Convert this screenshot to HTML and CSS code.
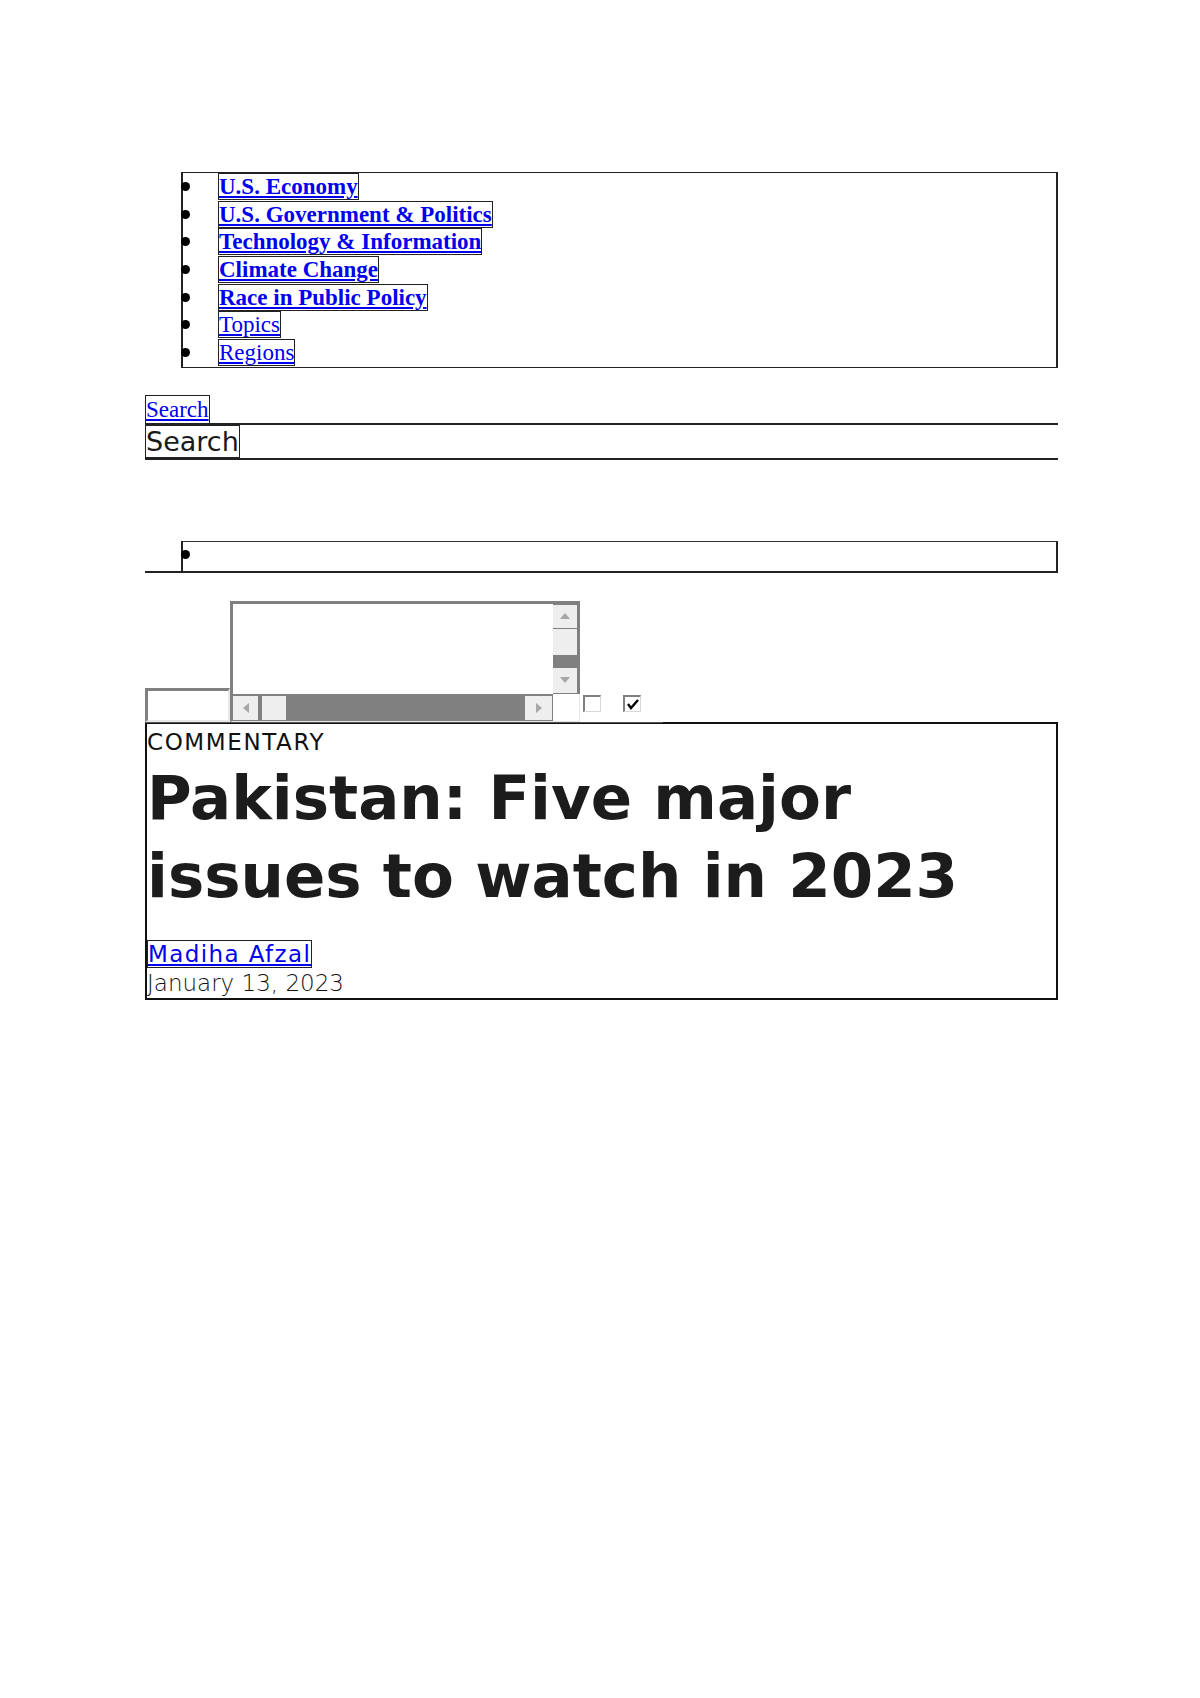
FILE: index.html
```html
<!DOCTYPE html>
<html lang="en">
<head>
<meta charset="utf-8">
<title>Pakistan: Five major issues to watch in 2023</title>
<link rel="stylesheet" href="styles.css">
</head>
<body>
<div class="page">
  <ul class="menu">
    <li><a class="menu-link strong" href="#">U.S. Economy</a></li>
    <li><a class="menu-link strong" href="#">U.S. Government &amp; Politics</a></li>
    <li><a class="menu-link strong" href="#">Technology &amp; Information</a></li>
    <li><a class="menu-link strong" href="#">Climate Change</a></li>
    <li><a class="menu-link strong" href="#">Race in Public Policy</a></li>
    <li><a class="menu-link" href="#">Topics</a></li>
    <li><a class="menu-link" href="#">Regions</a></li>
  </ul>

  <div class="search-toggle"><a class="search-link" href="#">Search</a></div>
  <form class="search-form"><label class="search-label">Search</label></form>

  <div class="subnav">
    <ul class="subnav-list"><li></li></ul>
  </div>

  <div class="controls">
    <span class="text-input"></span>
    <div class="textarea">
      <div class="ta-body"></div>
      <div class="vbar">
        <span class="sb-btn v-btn"><svg width="12" height="8" viewBox="0 0 12 8"><polygon points="1,7 11,7 6,1" fill="#a6a6a6"/></svg></span>
        <span class="v-thumb"></span>
        <span class="v-track"></span>
        <span class="sb-btn v-btn down"><svg width="12" height="8" viewBox="0 0 12 8"><polygon points="1,1 11,1 6,7" fill="#a6a6a6"/></svg></span>
      </div>
      <div class="hbar">
        <span class="sb-btn h-btn"><svg width="8" height="12" viewBox="0 0 8 12"><polygon points="7,1 7,11 1,6" fill="#a6a6a6"/></svg></span>
        <span class="h-thumb"></span>
        <span class="h-track"></span>
        <span class="sb-btn h-btn right"><svg width="8" height="12" viewBox="0 0 8 12"><polygon points="1,1 1,11 7,6" fill="#a6a6a6"/></svg></span>
      </div>
      <div class="corner"></div>
    </div>
    <span class="checkbox"></span>
    <span class="checkbox checked"><svg width="14" height="14" viewBox="0 0 14 14"><polyline points="2,7 5,11 12,3" fill="none" stroke="#000" stroke-width="2.4"/></svg></span>
  </div>

  <article class="article">
    <div class="kicker">COMMENTARY</div>
    <h1 class="headline">Pakistan: Five major issues to watch in 2023</h1>
    <div class="byline"><a class="author" href="#">Madiha Afzal</a></div>
    <div class="date">January 13, 2023</div>
  </article>
</div>
</body>
</html>
```

FILE: styles.css
```css
html, body {
  margin: 0;
  padding: 0;
  background: #fff;
}

.page {
  width: 913px;
  margin-left: 145px;
  padding-top: 172px;
  font-family: "DejaVu Sans", sans-serif;
  color: #111;
}

/* primary menu */
.menu {
  list-style: none;
  margin: 0 0 0 36px;
  padding: 0;
  border: 1px solid #222;
  border-left-width: 2px;
  border-right-width: 2px;
  font-family: "Liberation Serif", "Times New Roman", serif;
  font-size: 23px;
}

.menu li {
  height: 27.7px;
  line-height: 27.7px;
  white-space: nowrap;
}

.menu li::before,
.subnav-list li::before {
  content: "";
  display: inline-block;
  width: 9px;
  height: 9px;
  border-radius: 50%;
  background: #000;
  margin-left: -2px;
  margin-right: 28px;
  vertical-align: 3px;
}

.menu-link {
  color: #0000ee;
  text-decoration: underline;
  border: 1px solid #222;
}

.menu-link.strong {
  font-weight: bold;
}

/* search */
.search-toggle {
  margin-top: 27px;
  height: 28px;
}

.search-link {
  display: inline-block;
  vertical-align: top;
  font-family: "Liberation Serif", "Times New Roman", serif;
  font-size: 23px;
  line-height: 26px;
  padding-top: 1px;
  height: 26px;
  color: #0000ee;
  text-decoration: underline;
  border: 1px solid #222;
}

.search-form {
  margin: 0;
  height: 33px;
  border-top: 2px solid #222;
  border-bottom: 2px solid #222;
}

.search-label {
  display: inline-block;
  vertical-align: top;
  font-size: 27px;
  line-height: 31px;
  color: #1a1a1a;
  border: 1px solid #222;
}

/* secondary nav */
.subnav {
  margin-top: 81px;
  border-bottom: 2px solid #222;
}

.subnav-list {
  list-style: none;
  margin: 0 0 0 36px;
  padding: 0;
  border-top: 1px solid #333;
  border-left: 2px solid #222;
  border-right: 2px solid #222;
}

.subnav-list li {
  height: 29px;
  line-height: 29px;
}

/* form controls */
.controls {
  position: relative;
  z-index: 1;
  display: flex;
  align-items: flex-end;
  width: 518px;
  margin-top: 28px;
  margin-bottom: -1px;
  background: #fff;
  border-bottom: 1px solid #555;
}

.text-input {
  box-sizing: border-box;
  width: 85px;
  height: 34px;
  background: #fff;
  border-top: 3px solid #808080;
  border-left: 3px solid #808080;
  border-right: 2px solid #e8e8e8;
  border-bottom: 2px solid #e8e8e8;
}

.textarea {
  display: grid;
  grid-template-columns: 320px 27px;
  grid-template-rows: 90px 27px;
  border-top: 3px solid #808080;
  border-left: 3px solid #808080;
  border-bottom: 1px solid #e6e6e6;
  background: #fff;
}

.ta-body {
  background: #fff;
}

.vbar {
  display: flex;
  flex-direction: column;
  background: #808080;
  padding: 1px 3px 1px 0;
}

.sb-btn {
  display: flex;
  align-items: center;
  justify-content: center;
  background: #eeeeee;
}

.v-btn {
  height: 23px;
}

.v-btn.down {
  height: 25px;
}

.v-thumb {
  height: 26px;
  margin-top: 1px;
  background: #eeeeee;
}

.v-track {
  flex: 1;
}

.hbar {
  display: flex;
  background: #808080;
  padding: 2px 1px 1px 0;
}

.h-btn {
  width: 25px;
}

.h-btn.right {
  width: 27px;
}

.h-thumb {
  width: 24px;
  margin-left: 4px;
  background: #eeeeee;
}

.h-track {
  flex: 1;
}

.corner {
  background: #fff;
  border-right: 1px solid #e6e6e6;
}

.checkbox {
  box-sizing: border-box;
  display: flex;
  align-items: center;
  justify-content: center;
  width: 18px;
  height: 17px;
  margin-bottom: 10px;
  margin-left: 3px;
  background: #fff;
  border-top: 2px solid #808080;
  border-left: 2px solid #808080;
  border-right: 1px solid #d8d8d8;
  border-bottom: 1px solid #d8d8d8;
}

.checkbox.checked {
  margin-left: 22px;
}

/* article header */
.article {
  border: 2px solid #111;
}

.kicker {
  padding-top: 1px;
  font-size: 23px;
  line-height: 34px;
  letter-spacing: 1.6px;
  color: #111;
}

.headline {
  margin: 0 0 25px;
  font-size: 61px;
  line-height: 78px;
  font-weight: bold;
  color: #1c1c1c;
}

.byline {
  height: 28px;
}

.author {
  display: inline-block;
  vertical-align: top;
  font-size: 23px;
  line-height: 26px;
  letter-spacing: 1.4px;
  color: #0000ee;
  text-decoration: underline;
  border: 1px solid #222;
}

.date {
  font-size: 23px;
  line-height: 30px;
  font-weight: 200;
  color: #111;
}
```
